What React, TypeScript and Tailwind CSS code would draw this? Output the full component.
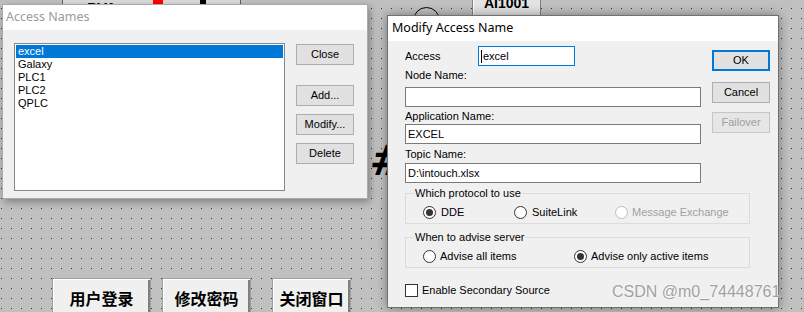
import React from 'react';

const ui = { fontFamily: '"Liberation Sans", Arial, sans-serif' };
const title = { fontFamily: '"Noto Sans", "Liberation Sans", sans-serif' };
const cjk = { fontFamily: '"Noto Sans CJK SC", "Liberation Sans", sans-serif' };

function WinButton({ label, className = '', disabled = false, def = false }: { label: string; className?: string; disabled?: boolean; def?: boolean }) {
  return (
    <div
      className={`flex h-[21px] w-[58px] items-center justify-center text-[11px] leading-[13px] ${
        disabled
          ? 'border border-[#c6c6c6] bg-[#e6e6e6] text-[#a0a0a0]'
          : def
          ? 'border-2 border-[#0078d7] bg-[#e1e1e1] text-black'
          : 'border border-[#adadad] bg-[#e1e1e1] text-black'
      } ${className}`}
    >
      {label}
    </div>
  );
}

function Radio({ checked = false, disabled = false }: { checked?: boolean; disabled?: boolean }) {
  return (
    <span
      className={`flex h-[13px] w-[13px] shrink-0 items-center justify-center rounded-full border bg-white ${
        disabled ? 'border-[#bcbcbc]' : 'border-[#333333]'
      }`}
    >
      {checked && <span className="h-[7px] w-[7px] rounded-full bg-[#333333]" />}
    </span>
  );
}

function Field({ value = '' }: { value?: string }) {
  return (
    <div className="flex h-[20px] w-[296px] items-center border border-[#7a7a7a] bg-white pl-[2px] text-[11px]">
      {value}
    </div>
  );
}

export default function App() {
  const names = ['excel', 'Galaxy', 'PLC1', 'PLC2', 'QPLC'];

  return (
    <div
      className="relative h-[312px] w-[804px] overflow-hidden bg-[#c0c0c0] bg-[radial-gradient(circle_at_0.5px_0.5px,#2e2e2e_0.9px,transparent_1px)] bg-size-[10px_10px] bg-position-[1px_8px]"
      style={ui}
    >
      {/* canvas objects peeking out behind the windows */}
      <div className="absolute left-[62px] top-[-20px] flex h-[25px] w-[179px] items-end border border-[#606060] bg-[#dcdcdc]">
        <span className="mb-[-11px] ml-[24px] text-[15px] font-bold leading-[15px] text-black">PV1</span>
        <div className="ml-[38px] h-full w-[10px] bg-[#ff0000]" />
        <div className="ml-[37px] h-full w-[6px] bg-black" />
      </div>
      <div className="absolute left-[413px] top-[7px] h-[28px] w-[27px] rounded-full border border-black" />
      <div className="absolute left-[472px] top-[-10px] flex h-[26px] w-[69px] items-center justify-center border border-[#808080] bg-[#e4e4e4] shadow-[inset_1px_1px_0_#ffffff]">
        <span className="text-[14px] font-bold text-black">AI1001</span>
      </div>
      <div
        className="absolute left-[370px] top-[139px] -skew-x-6 text-[42px] font-black leading-[44px] text-black"
        style={{ fontFamily: '"DejaVu Sans", sans-serif' }}
      >
        #
      </div>

      {/* Access Names window */}
      <div className="absolute left-[2px] top-[4px] flex h-[195px] w-[366px] flex-col border border-[#aaaaaa] bg-[#f0f0f0] shadow-[2px_3px_8px_rgba(0,0,0,0.35)]">
        <div className="flex h-[25px] items-center bg-white pl-[3px] text-[12.5px] text-[#9a9a9a]" style={title}>
          Access Names
        </div>
        <div className="flex pl-[11px] pt-[13px]">
          <div className="h-[148px] w-[271px] border border-[#828790] bg-white p-[1px] text-[11px] leading-[13px]">
            {names.map((n, i) => (
              <div key={n} className={`h-[13px] pl-[2px] ${i === 0 ? 'bg-[#0078d7] text-white' : 'text-black'}`}>
                {n}
              </div>
            ))}
          </div>
          <div className="ml-[11px] mt-[1px] flex flex-col">
            <WinButton label="Close" />
            <WinButton label="Add..." className="mt-[20px]" />
            <WinButton label="Modify..." className="mt-[8px]" />
            <WinButton label="Delete" className="mt-[8px]" />
          </div>
        </div>
      </div>

      {/* Modify Access Name window */}
      <div className="absolute left-[387px] top-[15px] flex h-[293px] w-[392px] flex-col border border-[#707070] bg-[#f0f0f0] shadow-[0_0_10px_rgba(0,0,0,0.4)]">
        <div className="flex h-[25px] items-center bg-white pl-[4px] text-[12.5px] text-black" style={title}>
          Modify Access Name
        </div>
        <div className="flex flex-col pl-[17px] pt-[5px] text-[11px] leading-[13px] text-black">
          <div className="flex">
            <div className="flex w-[296px] flex-col">
              <div className="flex h-[20px] items-center">
                <span className="w-[73px]">Access</span>
                <div className="flex h-[20px] w-[97px] items-center border border-[#0078d7] bg-white pl-[2px]">
                  <span className="mr-[1px] h-[13px] w-px bg-black" />
                  excel
                </div>
              </div>
              <div className="mt-[3px] h-[13px]">Node Name:</div>
              <div className="mt-[5px]">
                <Field />
              </div>
              <div className="mt-[3px] h-[13px]">Application Name:</div>
              <div className="mt-[1px]">
                <Field value="EXCEL" />
              </div>
              <div className="mt-[4px] h-[13px]">Topic Name:</div>
              <div className="mt-[2px]">
                <Field value="D:\intouch.xlsx" />
              </div>
            </div>
            <div className="ml-[11px] mt-[4px] flex flex-col">
              <WinButton label="OK" def />
              <WinButton label="Cancel" className="mt-[11px]" />
              <WinButton label="Failover" disabled className="mt-[9px]" />
            </div>
          </div>

          <fieldset className="mt-[4px] w-[345px] border border-[#dcdcdc] pb-[4px] pl-[17px] pt-[6px]">
            <legend className="-ml-[9px] px-[1px] leading-[13px]">Which protocol to use</legend>
            <div className="flex h-[13px] items-center">
              <div className="flex w-[91px] items-center gap-[5px]">
                <Radio checked />
                <span>DDE</span>
              </div>
              <div className="flex w-[101px] items-center gap-[5px]">
                <Radio />
                <span>SuiteLink</span>
              </div>
              <div className="flex items-center gap-[4px] text-[#a0a0a0]">
                <Radio disabled />
                <span>Message Exchange</span>
              </div>
            </div>
          </fieldset>

          <fieldset className="mt-[7px] w-[345px] border border-[#dcdcdc] pb-[4px] pl-[17px] pt-[6px]">
            <legend className="-ml-[9px] px-[1px] leading-[13px]">When to advise server</legend>
            <div className="flex h-[13px] items-center">
              <div className="flex w-[151px] items-center gap-[4px]">
                <Radio />
                <span>Advise all items</span>
              </div>
              <div className="flex items-center gap-[4px]">
                <Radio checked />
                <span>Advise only active items</span>
              </div>
            </div>
          </fieldset>

          <div className="mt-[16px] flex h-[13px] items-center gap-[4px]">
            <span className="h-[13px] w-[13px] border border-[#333333] bg-white" />
            <span>Enable Secondary Source</span>
          </div>
        </div>
      </div>

      {/* canvas buttons */}
      <div className="absolute left-[52px] top-[278px] flex text-[16px] font-bold text-black" style={cjk}>
        <div className="flex h-[40px] w-[99px] justify-center border border-[#a0a0a0] bg-[#f0f0f0] pt-[8px] leading-[22px] shadow-[inset_1px_1px_0_#ffffff,inset_-2px_-2px_0_#808080]">
          用户登录
        </div>
        <div className="ml-[11px] flex h-[40px] w-[89px] justify-center border border-[#a0a0a0] bg-[#f0f0f0] pt-[8px] leading-[22px] shadow-[inset_1px_1px_0_#ffffff,inset_-2px_-2px_0_#808080]">
          修改密码
        </div>
        <div className="ml-[21px] flex h-[40px] w-[79px] justify-center border border-[#a0a0a0] bg-[#f0f0f0] pt-[8px] leading-[22px] shadow-[inset_1px_1px_0_#ffffff,inset_-2px_-2px_0_#808080]">
          关闭窗口
        </div>
      </div>

      <div className="absolute left-[612px] top-[282px] whitespace-nowrap text-[16px] leading-[20px] text-[#a0a0a0] [text-shadow:0_0_2px_#ffffff,0_0_1px_#ffffff]">
        CSDN @m0_74448761
      </div>
    </div>
  );
}
